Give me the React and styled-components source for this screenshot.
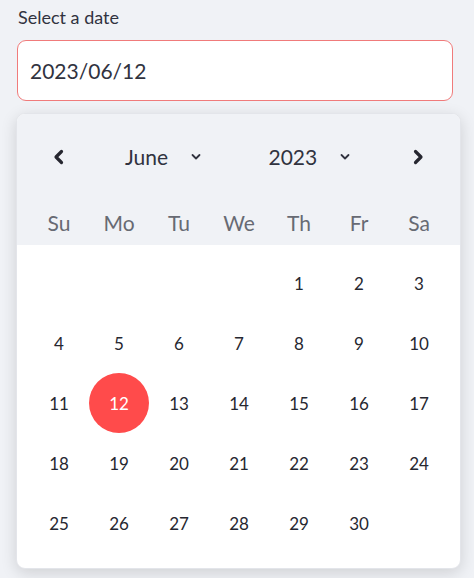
import React from "react";
import styled, { createGlobalStyle } from "styled-components";

const GlobalStyle = createGlobalStyle`
  html, body {
    margin: 0;
    padding: 0;
    background: #f0f2f6;
  }
  body {
    font-family: "Lato", "Liberation Sans", sans-serif;
    color: #31333f;
  }
`;

const Page = styled.div`
  width: 474px;
  height: 578px;
  box-sizing: border-box;
  padding: 4px 13px 0 16px;
  display: flex;
  flex-direction: column;
  overflow: hidden;
`;

const Label = styled.label`
  font-size: 18px;
  line-height: 26px;
  padding-left: 2px;
  color: #31333f;
`;

const Field = styled.div`
  margin: 10px 8px 0 1px;
  height: 61px;
  box-sizing: border-box;
  background: #fff;
  border: 1px solid #f07b7b;
  border-radius: 9px;
  display: flex;
  align-items: center;
  padding-left: 12px;
  font-size: 21px;
  color: #31333f;
`;

const Popover = styled.div`
  margin-top: 12px;
  width: 445px;
  height: 456px;
  box-sizing: border-box;
  border-radius: 9px;
  border: 1px solid #e3e5ea;
  background: #fff;
  box-shadow: 0 4px 16px rgba(0, 0, 0, 0.14);
  overflow: hidden;
  display: flex;
  flex-direction: column;
`;

const Head = styled.div`
  background: #f0f2f6;
  padding: 0 12px;
`;

const Nav = styled.div`
  height: 85px;
  display: grid;
  grid-template-columns: 60px 1fr 1fr 60px;
  align-items: center;
`;

const Arrow = styled.button`
  border: 0;
  background: transparent;
  padding: 0;
  display: flex;
  justify-content: center;
  align-items: center;
  color: #262730;
`;

const Select = styled.div`
  display: flex;
  align-items: center;
  padding-left: ${(p) => p.$indent}px;
  gap: ${(p) => p.$gap}px;
  font-size: 21px;
  color: #31333f;
`;

const Grid = styled.div`
  display: grid;
  grid-template-columns: repeat(7, 60px);
  grid-auto-rows: ${(p) => p.$row}px;
`;

const WeekDay = styled.div`
  display: flex;
  align-items: center;
  justify-content: center;
  font-size: 21px;
  color: #676a73;
`;

const Body = styled.div`
  padding: 8px 12px 0;
`;

const Day = styled.div`
  display: flex;
  align-items: center;
  justify-content: center;
  font-size: 17px;
  border-radius: 50%;
  color: ${(p) => (p.$selected ? "#fff" : "#262730")};
  background: ${(p) => (p.$selected ? "#ff4b4b" : "transparent")};
`;

const Chevron = ({ dir }) => (
  <svg width="14" height="16" viewBox="0 0 14 16" aria-hidden="true">
    <path
      d={dir === "left" ? "M9.5 2.5 L4 8 L9.5 13.5" : "M4.5 2.5 L10 8 L4.5 13.5"}
      fill="none"
      stroke="currentColor"
      strokeWidth="3.2"
      strokeLinecap="round"
      strokeLinejoin="round"
    />
  </svg>
);

const Caret = () => (
  <svg width="12" height="8" viewBox="0 0 12 8" aria-hidden="true">
    <path
      d="M2.5 2 L6 5.5 L9.5 2"
      fill="none"
      stroke="#31333f"
      strokeWidth="1.8"
      strokeLinecap="round"
      strokeLinejoin="round"
    />
  </svg>
);

const weekDays = ["Su", "Mo", "Tu", "We", "Th", "Fr", "Sa"];
const cells = [...Array(4).fill(null), ...Array.from({ length: 30 }, (_, i) => i + 1)];

export default function App() {
  return (
    <>
      <GlobalStyle />
      <Page>
        <Label>Select a date</Label>
        <Field>2023/06/12</Field>
        <Popover>
          <Head>
            <Nav>
              <Arrow aria-label="Previous month">
                <Chevron dir="left" />
              </Arrow>
              <Select $indent={36} $gap={22}>
                June <Caret />
              </Select>
              <Select $indent={30} $gap={22}>
                2023 <Caret />
              </Select>
              <Arrow aria-label="Next month">
                <Chevron dir="right" />
              </Arrow>
            </Nav>
            <Grid $row={46}>
              {weekDays.map((d) => (
                <WeekDay key={d}>{d}</WeekDay>
              ))}
            </Grid>
          </Head>
          <Body>
            <Grid $row={60}>
              {cells.map((d, i) => (
                <Day key={i} $selected={d === 12}>
                  {d ?? ""}
                </Day>
              ))}
            </Grid>
          </Body>
        </Popover>
      </Page>
    </>
  );
}
